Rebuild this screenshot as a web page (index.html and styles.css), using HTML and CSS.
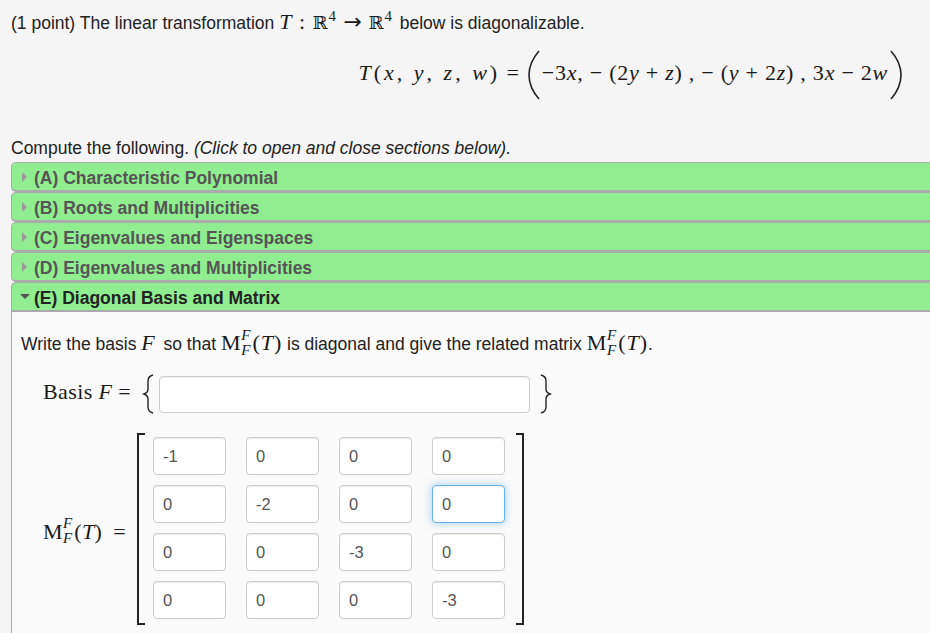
FILE: index.html

```html
<!DOCTYPE html>
<html>
	<head>
		<title>Diagonalizable transformation</title>
		<link rel="stylesheet" href="styles.css">
	</head>
	<body>
		<p class="intro">(1 point) The linear transformation <span class="m inl"><i>T</i> : <span class="bb">ℝ</span><sup>4</sup> <span class="arr">→</span> <span class="bb">ℝ</span><sup>4</sup></span> below is diagonalizable.</p>

		<div class="display">
			<span class="m big">
				<span class="lhs"><i>T</i>(<i>x</i>, <i>y</i>, <i>z</i>, <i>w</i>)</span> =
				<svg class="paren" width="14" height="50" viewBox="0 0 14 50"><path d="M12 1C5 9 2 16 2 25s3 16 10 24" fill="none" stroke="#222" stroke-width="1.6"/></svg>−3<i>x</i>, − (2<i>y</i> + <i>z</i>) , − (<i>y</i> + 2<i>z</i>) , 3<i>x</i> − 2<i>w</i><svg class="paren" width="14" height="50" viewBox="0 0 14 50"><path d="M2 1c7 8 10 15 10 24s-3 16-10 24" fill="none" stroke="#222" stroke-width="1.6"/></svg>
			</span>
		</div>

		<p class="compute">Compute the following. <em>(Click to open and close sections below).</em></p>

		<div class="sections">
			<h3 class="head"><span class="arrow"></span>(A) Characteristic Polynomial</h3>
			<h3 class="head"><span class="arrow"></span>(B) Roots and Multiplicities</h3>
			<h3 class="head"><span class="arrow"></span>(C) Eigenvalues and Eigenspaces</h3>
			<h3 class="head"><span class="arrow"></span>(D) Eigenvalues and Multiplicities</h3>
			<h3 class="head open"><span class="arrow"></span>(E) Diagonal Basis and Matrix</h3>

			<div class="body">
				<p class="ask">Write the basis <span class="m mid basis-f"><i>F</i></span> so that <span class="m mid">M<span class="stack"><i>F</i><i>F</i></span>(<i>T</i>)</span> is diagonal and give the related matrix <span class="m mid">M<span class="stack"><i>F</i><i>F</i></span>(<i>T</i>)</span>.</p>

				<div class="basis">
					<span class="m mid basis-label">Basis <i>F</i> =</span>
					<svg class="brace" width="14" height="40" viewBox="0 0 14 40"><path d="M12 1C8 2 7 4 7 7v8c0 3-1 4-4 5 3 1 4 2 4 5v8c0 3 1 5 5 6" fill="none" stroke="#222" stroke-width="1.4"/></svg>
					<input class="basis-input" type="text">
					<svg class="brace" width="14" height="40" viewBox="0 0 14 40"><path d="M2 1c4 1 5 3 5 6v8c0 3 1 4 4 5-3 1-4 2-4 5v8c0 3-1 5-5 6" fill="none" stroke="#222" stroke-width="1.4"/></svg>
				</div>

				<div class="matrix-row">
					<span class="m mid matrix-label">M<span class="stack"><i>F</i><i>F</i></span>(<i>T</i>) =</span>
					<div class="bracket">
						<input type="text" value="-1">
						<input type="text" value="0">
						<input type="text" value="0">
						<input type="text" value="0">
						<input type="text" value="0">
						<input type="text" value="-2">
						<input type="text" value="0">
						<input type="text" class="focus" value="0">
						<input type="text" value="0">
						<input type="text" value="0">
						<input type="text" value="-3">
						<input type="text" value="0">
						<input type="text" value="0">
						<input type="text" value="0">
						<input type="text" value="0">
						<input type="text" value="-3">
					</div>
				</div>
			</div>
		</div>
	</body>
</html>
```

FILE: styles.css

```css
*{
	box-sizing: border-box;
}
html, body{
	height: 633px;
	overflow: hidden;
}
body{
	margin: 0;
	padding: 12px 0 0 11px;
	background: #f5f5f5;
	color: #222;
	font-family: "Liberation Sans", Arial, sans-serif;
	font-size: 17.5px;
	line-height: 22px;
	width: 960px;
}
p{
	margin: 0;
}
.intro{
	height: 22px;
}
.m{
	font-family: "Liberation Serif", "DejaVu Serif", serif;
	font-size: 22px;
	color: #1a1a1a;
	letter-spacing: .6px;
}
.inl{
	margin-right: 2px;
	line-height: 20px;
	letter-spacing: 1px;
}
.arr{
	font-family: "DejaVu Sans", sans-serif;
	font-size: 22px;
	letter-spacing: 0;
}
.m.big{
	font-size: 22px;
	letter-spacing: .75px;
}
.m.big .lhs{
	letter-spacing: 3px;
}
.m.mid{
	font-size: 22px;
	letter-spacing: .4px;
}
.ask .m.mid{
	letter-spacing: .9px;
}
.basis-f{
	margin-right: 3px;
}
.m sup{
	font-size: 15px;
	line-height: 0;
}
.bb{
	font-family: "DejaVu Serif", serif;
	font-size: 18px;
}
.display{
	display: flex;
	justify-content: flex-end;
	padding-right: 56px;
	margin-top: 15px;
	height: 52px;
	align-items: center;
}
.paren{
	vertical-align: middle;
	margin: 0 1px;
}
.compute{
	margin-top: 36px;
}
.sections{
	margin-top: 3px;
}
.head{
	display: flex;
	align-items: center;
	height: 30px;
	margin: 0;
	padding: 2px 0 0 10px;
	background: #90ee90;
	border: 1px solid #aaa;
	border-width: 1px 0 2px 1px;
	border-radius: 5px 0 0 5px;
	color: #555;
	font-size: 17.5px;
	font-weight: 700;
}
.head.open{
	color: #222;
	border-radius: 5px 0 0 0;
}
.arrow{
	width: 0;
	height: 0;
	margin-right: 7px;
	margin-top: -2px;
	border-style: solid;
	border-width: 5px 0 5px 5px;
	border-color: transparent transparent transparent #999;
}
.open .arrow{
	border-width: 5px 5px 0 5px;
	border-color: #555 transparent transparent transparent;
	margin-left: -2px;
	margin-right: 4px;
}
.body{
	background: #fafafa;
	border-left: 1px solid #aaa;
	padding: 18px 0 0 9px;
	height: 340px;
}
.ask{
	height: 26px;
	line-height: 26px;
	white-space: nowrap;
}
.stack{
	display: inline-flex;
	flex-direction: column;
	vertical-align: middle;
	font-size: 15px;
	line-height: 15px;
	margin: -8px 2px -4px 0;
	letter-spacing: 0;
}
.basis{
	display: flex;
	align-items: center;
	margin-top: 18px;
	padding-left: 22px;
}
.basis-label{
	width: 98px;
	flex: none;
	margin-bottom: 4px;
}
.brace{
	flex: none;
}
.basis-input{
	width: 371px;
	height: 37px;
	margin: 0 9px 0 4px;
}
input{
	border: 1px solid #ccc;
	border-radius: 4px;
	background: #fff;
	box-shadow: inset 0 1px 1px rgba(0,0,0,.075);
	font-family: "Liberation Sans", Arial, sans-serif;
	font-size: 16.5px;
	color: #555;
	padding: 0 9px;
	outline: none;
}
.matrix-row{
	display: flex;
	align-items: center;
	margin-top: 19px;
	padding-left: 22px;
}
.matrix-label{
	width: 94px;
	flex: none;
	margin-top: 5px;
	word-spacing: 5px;
}
.bracket{
	display: grid;
	grid-template-columns: repeat(4, 73px);
	grid-auto-rows: 38px;
	column-gap: 20px;
	row-gap: 10px;
	padding: 2px 0 0 14px;
	height: 192px;
	width: 387px;
	border: solid #222;
	border-width: 2px;
	border-image: linear-gradient(to right, #222 8px, transparent 8px, transparent 379px, #222 379px) 2;
}
.focus{
	border-color: #66afe9;
	box-shadow: inset 0 1px 1px rgba(0,0,0,.075), 0 0 8px rgba(102,175,233,.6);
}
```
